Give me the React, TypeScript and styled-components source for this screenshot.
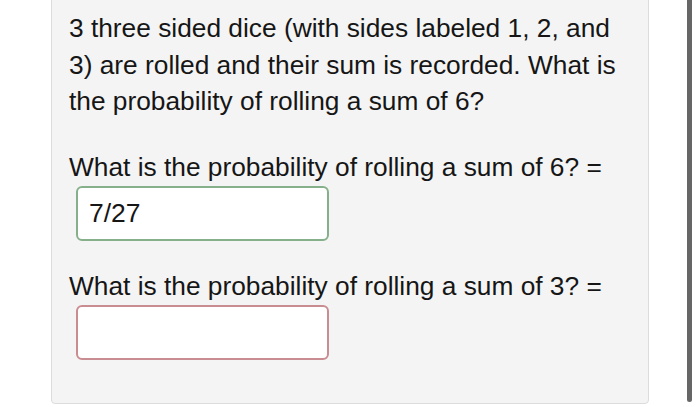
import React from "react";
import styled, { createGlobalStyle } from "styled-components";

const Global = createGlobalStyle`
  html, body { margin: 0; padding: 0; background: #ffffff; overflow: hidden; }
  body { width: 700px; height: 407px; font-family: "Liberation Sans", Arial, sans-serif; }
`;

const Page = styled.div`
  display: flex;
  align-items: flex-start;
  width: 700px;
  height: 417px;
  margin-top: -10px;
`;

const Card = styled.div`
  flex: none;
  box-sizing: border-box;
  margin-left: 51px;
  width: 598px;
  background: #f4f4f4;
  border: 1px solid #dcdcdc;
  border-radius: 4px;
  padding: 19px 14px 43px 17px;
  color: #161616;
  font-size: 26.3px;
`;

const Para = styled.p`
  margin: 0 0 32px 0;
  line-height: 36.5px;
`;

const Label = styled.div`
  line-height: 30px;
  margin-bottom: 4px;
`;

const Field = styled.div<{ $state: "ok" | "bad" }>`
  box-sizing: border-box;
  margin-left: 7px;
  width: 253px;
  height: 55px;
  background: #ffffff;
  border: 2px solid ${(p) => (p.$state === "ok" ? "#86b08a" : "#c98c90")};
  border-radius: 6px;
  padding: 0 11px;
  display: flex;
  align-items: center;
  font-size: 26.5px;
  margin-bottom: 30px;
  &:last-child { margin-bottom: 0; }
`;

const Bar = styled.div`
  flex: none;
  margin-left: 38px;
  margin-top: 10px;
  width: 5px;
  height: 402px;
  background: #666666;
  border-radius: 0 0 3px 3px;
`;

export default function App() {
  return (
    <>
      <Global />
      <Page>
        <Card>
          <Para>
            3 three sided dice (with sides labeled 1, 2, and 3) are rolled and their sum is recorded. What is the probability of rolling a sum of 6?
          </Para>
          <Label>What is the probability of rolling a sum of 6? =</Label>
          <Field $state="ok">7/27</Field>
          <Label>What is the probability of rolling a sum of 3? =</Label>
          <Field $state="bad" />
        </Card>
        <Bar />
      </Page>
    </>
  );
}
